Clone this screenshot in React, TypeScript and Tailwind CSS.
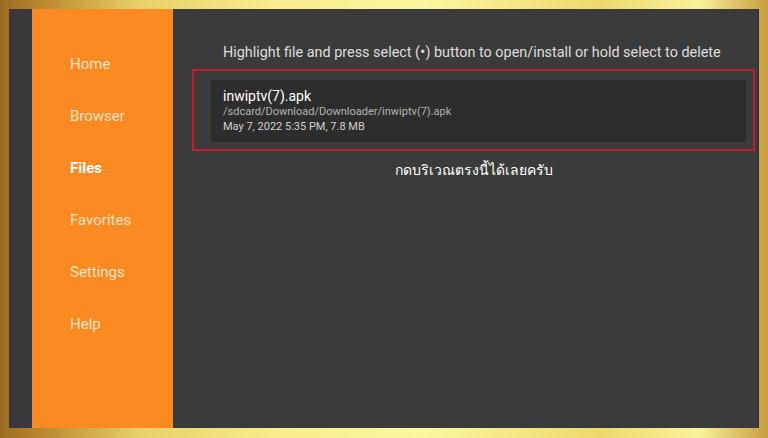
import React from "react";

const items = ["Home", "Browser", "Files", "Favorites", "Settings", "Help"];

export default function App() {
  return (
    <div
      className="w-[768px] h-[438px] pt-[9px] pl-[9px] pr-[9px] pb-[10px] bg-[linear-gradient(90deg,#9a6a22_0%,#b8862e_5%,#e8cf68_18%,#f7ec8a_35%,#fbf7a0_55%,#eed96c_78%,#f9f29a_91%,#c99d40_100%)]"
      style={{ fontFamily: 'Roboto, "Noto Sans", "Liberation Sans", sans-serif' }}
    >
      <div className="flex h-full w-full">
        <div className="w-[23px] bg-[#39393d]" />
        <div className="w-[141px] bg-[#fc8a22] pl-[38px] pt-[45px] flex flex-col gap-[32px]">
          {items.map((it) => (
            <div
              key={it}
              className={
                it === "Files"
                  ? "h-[20px] leading-[20px] text-[15px] font-bold text-white"
                  : "h-[20px] leading-[20px] text-[15px] text-[#fde2c6]"
              }
            >
              {it}
            </div>
          ))}
        </div>
        <div className="flex-1 bg-[#3b3b3b] pt-[33px] border-r border-[#2e2e2e]">
          <div className="pl-[50px] text-[14.4px] leading-[20px] text-[#dedede]">
            Highlight file and press select (<span className="text-[16px]">•</span>) button to open/install or hold select to delete
          </div>
          <div className="ml-[19px] mr-[3px] mt-[6px] border-2 border-[#c41e28] pl-[17px] pr-[7px] pt-[9px] pb-[7px]">
            <div className="bg-[#2d2d2d] h-[62px] pl-[12px] pt-[7px]">
              <div className="text-[14px] leading-[18px] text-white">inwiptv(7).apk</div>
              <div className="text-[11px] leading-[14px] text-[#b4b4b4]">/sdcard/Download/Downloader/inwiptv(7).apk</div>
              <div className="text-[11px] leading-[15px] text-[#d0d0d0]">May 7, 2022 5:35 PM, 7.8 MB</div>
            </div>
          </div>
          <div className="ml-[19px] mr-[3px] mt-[8px] text-center text-[14px] leading-[22px] text-white">
            กดบริเวณตรงนี้ได้เลยครับ
          </div>
        </div>
      </div>
    </div>
  );
}
